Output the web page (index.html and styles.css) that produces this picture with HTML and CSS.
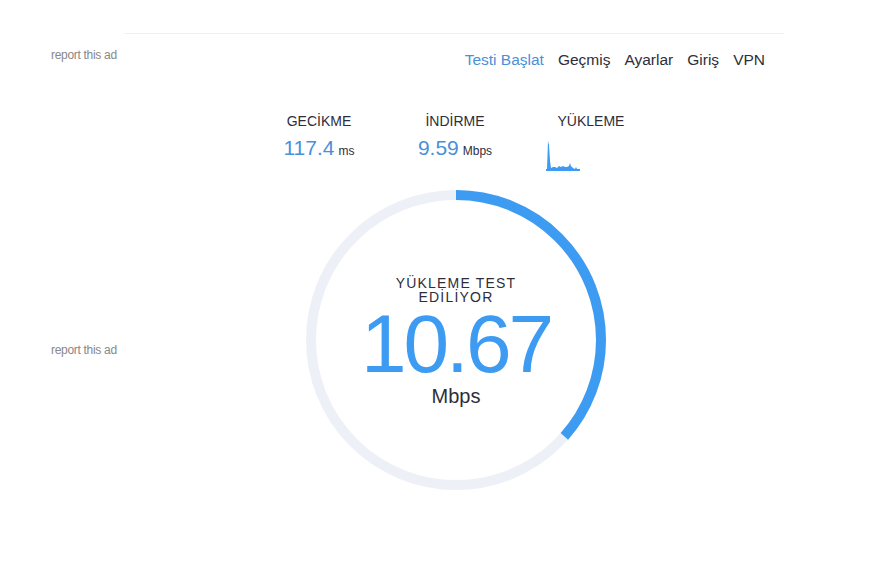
FILE: index.html
```html
<!DOCTYPE html>
<html lang="tr">
<head>
<meta charset="utf-8">
<title>Hız Testi</title>
<link rel="stylesheet" href="styles.css">
</head>
<body>
<div class="page">
  <aside class="ad-col">
    <div class="ad ad-top">report this ad</div>
    <div class="ad ad-mid">report this ad</div>
  </aside>
  <main class="main">
    <nav class="nav">
      <a class="nav-item active">Testi Başlat</a>
      <a class="nav-item">Geçmiş</a>
      <a class="nav-item">Ayarlar</a>
      <a class="nav-item">Giriş</a>
      <a class="nav-item">VPN</a>
    </nav>
    <section class="stats">
      <div class="stat">
        <div class="stat-label">GECİKME</div>
        <div class="stat-value">117.4<span class="unit">ms</span></div>
      </div>
      <div class="stat">
        <div class="stat-label">İNDİRME</div>
        <div class="stat-value">9.59<span class="unit">Mbps</span></div>
      </div>
      <div class="stat">
        <div class="stat-label">YÜKLEME</div>
        <svg class="spark" width="90" height="32" viewBox="0 0 90 32">
          <path d="M0 32 L0 30 L1 30 L2 2 L3 6 L4 22 L5 29 L7 28 L9 28 L11 29 L13 27 L15 28 L17 27 L19 28 L21 28 L23 27 L24 24 L25 27 L27 29 L29 30 L30 28 L31 30 L34 30 L34 32 Z" fill="#3d9bf2"/>
        </svg>
      </div>
    </section>
    <section class="gauge-wrap">
      <div class="gauge">
        <svg class="ring" width="300" height="300" viewBox="0 0 300 300">
          <circle cx="150" cy="150" r="145" fill="none" stroke="#eef0f7" stroke-width="10"/>
          <circle cx="150" cy="150" r="145" fill="none" stroke="#3d9bf2" stroke-width="10"
            stroke-dasharray="333 1000" transform="rotate(-90 150 150)"/>
        </svg>
        <div class="gauge-text">
          <div class="gauge-label">YÜKLEME TEST</div>
          <div class="gauge-label">EDİLİYOR</div>
          <div class="gauge-value">10.67</div>
          <div class="gauge-unit">Mbps</div>
        </div>
      </div>
    </section>
  </main>
</div>
</body>
</html>
```
FILE: styles.css
```css
html, body {
  margin: 0;
  padding: 0;
  background: #ffffff;
}
body {
  font-family: "Liberation Sans", Arial, sans-serif;
  color: #2e2e3a;
  width: 886px;
  height: 568px;
  overflow: hidden;
}
.page {
  display: flex;
}
.ad-col {
  width: 124px;
  padding-left: 51px;
  box-sizing: border-box;
}
.ad {
  font-size: 12px;
  color: #888888;
  letter-spacing: -0.3px;
  white-space: nowrap;
  line-height: 14px;
}
.ad-top {
  margin-top: 48px;
}
.ad-mid {
  margin-top: 281px;
}
.main {
  width: 660px;
  margin-top: 33px;
  border-top: 1px solid #f0f0f2;
}
.nav {
  display: flex;
  justify-content: flex-end;
  gap: 14px;
  padding-right: 19px;
  margin-top: 16px;
  font-size: 15.5px;
  line-height: 20px;
}
.nav-item {
  color: #2e2e3a;
  cursor: pointer;
}
.nav-item.active {
  color: #4a90d9;
}
.stats {
  display: flex;
  justify-content: center;
  margin-top: 43px;
  padding-left: 2px;
}
.stat {
  width: 136px;
  display: flex;
  flex-direction: column;
  align-items: center;
}
.stat-label {
  font-size: 14px;
  line-height: 16px;
  color: #2e2e3a;
}
.stat-value {
  margin-top: 7px;
  font-size: 21px;
  line-height: 24px;
  color: #4a90d9;
}
.unit {
  font-size: 12px;
  color: #2e2e3a;
  margin-left: 4px;
}
.spark {
  display: block;
  margin-top: 10px;
}
.gauge-wrap {
  display: flex;
  justify-content: center;
  margin-top: 19px;
  padding-left: 4px;
}
.gauge {
  position: relative;
  width: 300px;
  height: 300px;
}
.ring {
  display: block;
}
.gauge-text {
  position: absolute;
  inset: 0;
  display: flex;
  flex-direction: column;
  align-items: center;
  padding-top: 86px;
}
.gauge-label {
  font-size: 14px;
  line-height: 14px;
  letter-spacing: 1.2px;
  text-align: center;
  color: #2e2e3a;
}
.gauge-value {
  font-size: 82px;
  line-height: 80px;
  color: #3d9bf2;
  letter-spacing: -3px;
}
.gauge-unit {
  font-size: 20px;
  line-height: 24px;
  color: #2e2e3a;
}
```
